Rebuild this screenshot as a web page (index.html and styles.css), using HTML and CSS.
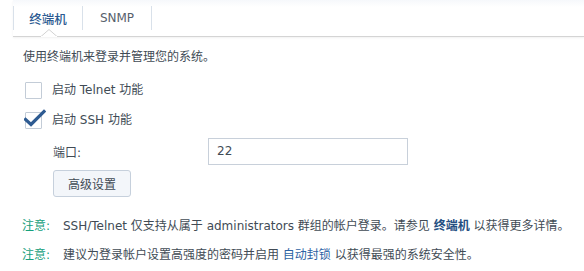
FILE: index.html
```html
<!DOCTYPE html>
<html lang="zh">
<head>
<meta charset="utf-8">
<link rel="stylesheet" href="styles.css">
</head>
<body>
<div class="topbar">
  <div class="tabs">
    <div class="tab active">终端机
      <svg class="notch" width="16" height="8" viewBox="0 0 16 8"><polygon points="0,7.5 8,0.5 16,7.5" fill="#fff" stroke="#d2d2d2" stroke-width="1"/><rect x="0" y="7" width="16" height="2" fill="#fff"/></svg>
    </div>
    <div class="tab">SNMP</div>
  </div>
</div>
<div class="content">
  <div class="desc">使用终端机来登录并管理您的系统。</div>
  <div class="check-row first">
    <span class="box"></span>
    <span class="label">启动 Telnet 功能</span>
  </div>
  <div class="check-row second">
    <span class="box">
      <svg class="tick" width="22" height="20" viewBox="0 0 22 20"><path d="M1.5 10.5 L7 15.5 L20 2.5" fill="none" stroke="#2e5b92" stroke-width="3.2" stroke-linecap="square" stroke-linejoin="miter"/></svg>
    </span>
    <span class="label">启动 SSH 功能</span>
  </div>
  <div class="port-row">
    <span class="port-label">端口:</span>
    <div class="input">22</div>
  </div>
  <div class="btn-row">
    <button class="btn">高级设置</button>
  </div>
  <div class="note first-note"><span class="note-label">注意:</span><span class="note-text">SSH/Telnet 仅支持从属于 administrators 群组的帐户登录。请参见 <a class="link bold">终端机</a> 以获得更多详情。</span></div>
  <div class="note second-note"><span class="note-label">注意:</span><span class="note-text">建议为登录帐户设置高强度的密码并启用 <a class="link">自动封锁</a> 以获得最强的系统安全性。</span></div>
</div>
</body>
</html>
```
FILE: styles.css
```css
html, body {
  margin: 0;
  padding: 0;
  background: #ffffff;
}
body {
  font-family: "DejaVu Sans", "Noto Sans CJK SC", sans-serif;
  font-size: 12px;
  color: #414b55;
  width: 584px;
  height: 271px;
  overflow: hidden;
}
.topbar {
  background: linear-gradient(#f6f8fb 0, #ffffff 7px);
  height: 36px;
  border-bottom: 1px solid #d4d4d4;
  box-shadow: 0 1px 2px rgba(0,0,0,0.06);
  margin-left: 13px;
  position: relative;
}
.tabs {
  display: flex;
  padding-top: 6px;
  height: 24px;
}
.tab {
  width: 68px;
  height: 24px;
  border-left: 1px solid #d9e1ea;
  display: flex;
  align-items: center;
  justify-content: center;
  font-size: 12px;
  color: #56606b;
  position: relative;
}
.tab:last-child {
  border-right: 1px solid #d9e1ea;
}
.tab.active {
  color: #2c5a91;
  font-weight: 500;
  font-size: 12.5px;
}
.notch {
  position: absolute;
  left: 27px;
  top: 23px;
}
.content {
  padding-left: 23px;
}
.desc {
  margin-top: 10px;
  height: 20px;
  line-height: 20px;
}
.check-row {
  display: flex;
  align-items: center;
  height: 18px;
  margin-left: 2px;
}
.check-row.first { margin-top: 14px; }
.check-row.second { margin-top: 12px; }
.box {
  width: 15px;
  height: 15px;
  border: 1px solid #c3ccd7;
  border-radius: 1px;
  position: relative;
  flex: none;
}
.tick {
  position: absolute;
  left: -2px;
  top: -4px;
}
.label {
  margin-left: 10px;
  line-height: 18px;
}
.port-row {
  display: flex;
  align-items: center;
  margin-top: 9px;
  margin-left: 30px;
  height: 27px;
}
.port-label {
  width: 155px;
}
.input {
  width: 190px;
  height: 25px;
  border: 1px solid #c8d0da;
  padding-left: 8px;
  line-height: 25px;
  font-size: 12px;
  color: #414b55;
}
.btn-row {
  margin-top: 5px;
  margin-left: 30px;
  height: 27px;
}
.btn {
  width: 78px;
  height: 27px;
  border: 1px solid #c6d0dc;
  border-radius: 3px;
  background: #f3f6fa;
  font-family: inherit;
  font-size: 12px;
  color: #414b55;
  padding: 0;
}
.note {
  height: 20px;
  line-height: 20px;
  display: flex;
  margin-left: -1px;
  white-space: nowrap;
}
.first-note { margin-top: 19px; }
.second-note { margin-top: 9px; }
.note-label {
  color: #17a07c;
  width: 41px;
  flex: none;
}
.link {
  color: #2d62a3;
}
.link.bold {
  color: #254f82;
  font-weight: bold;
}
```
